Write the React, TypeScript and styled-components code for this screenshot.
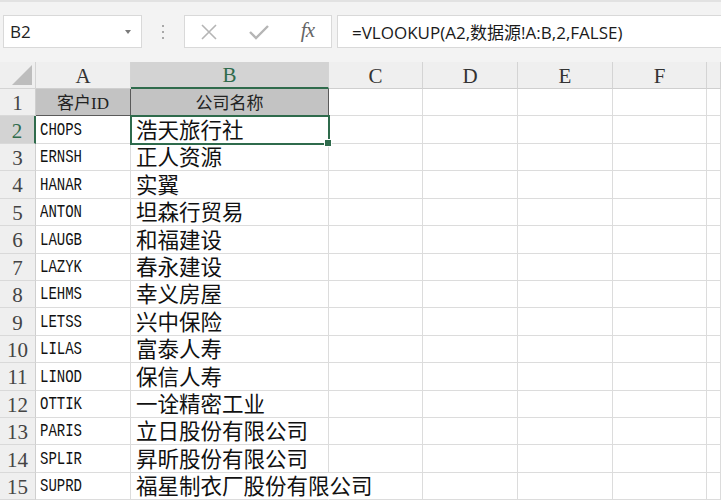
import React from "react";
import styled, { createGlobalStyle, css } from "styled-components";

const GlobalStyle = createGlobalStyle`
  html, body {
    margin: 0;
    padding: 0;
    background: #ffffff;
    overflow: hidden;
  }
`;

const rows: [string, string][] = [
  ["CHOPS", "浩天旅行社"],
  ["ERNSH", "正人资源"],
  ["HANAR", "实翼"],
  ["ANTON", "坦森行贸易"],
  ["LAUGB", "和福建设"],
  ["LAZYK", "春永建设"],
  ["LEHMS", "幸义房屋"],
  ["LETSS", "兴中保险"],
  ["LILAS", "富泰人寿"],
  ["LINOD", "保信人寿"],
  ["OTTIK", "一诠精密工业"],
  ["PARIS", "立日股份有限公司"],
  ["SPLIR", "昇昕股份有限公司"],
  ["SUPRD", "福星制衣厂股份有限公司"],
];

const columns = ["A", "B", "C", "D", "E", "F", ""];
const GREEN = "#2f6b4c";
const GRID = "#dcdcdc";

const Page = styled.div`
  width: 721px;
  height: 500px;
  overflow: hidden;
  display: flex;
  flex-direction: column;
`;

const Toolbar = styled.div`
  height: 62px;
  flex: none;
  box-sizing: border-box;
  background: #f3f3f3;
  border-top: 2px solid #e2e2e2;
  padding: 13px 0 0 3px;
  display: flex;
  align-items: flex-start;
`;

const Box = styled.div`
  height: 33px;
  box-sizing: border-box;
  background: #ffffff;
  border: 1px solid #d9d9d9;
  display: flex;
  align-items: center;
`;

const NameBox = styled(Box)`
  width: 139px;
  padding: 0 0 0 6px;
  justify-content: space-between;
  font-family: "Open Sans", "Liberation Sans", sans-serif;
  font-size: 17px;
  color: #222;
`;

const Caret = styled.span`
  width: 0;
  height: 0;
  margin-right: 10px;
  border-left: 3.5px solid transparent;
  border-right: 3.5px solid transparent;
  border-top: 4px solid #7a7a7a;
`;

const Dots = styled.div`
  width: 42px;
  height: 33px;
  display: flex;
  flex-direction: column;
  align-items: center;
  justify-content: center;
  gap: 4px;
  span {
    width: 2px;
    height: 2px;
    background: #a8a8a8;
  }
`;

const ActionBox = styled(Box)`
  width: 148px;
  padding: 0 17px 0 15px;
  justify-content: space-between;
`;

const Fx = styled.span`
  font-family: "Liberation Serif", serif;
  font-style: italic;
  font-size: 21px;
  color: #666;
  letter-spacing: -1px;
  padding-bottom: 2px;
`;

const FormulaBox = styled(Box)`
  flex: 1;
  margin-left: 5px;
  border-right: none;
  padding-left: 14px;
  font-family: "Open Sans", "Liberation Sans", "Noto Sans CJK SC", sans-serif;
  font-size: 17px;
  color: #1a1a1a;
`;

const Sheet = styled.div`
  flex: 1;
  display: grid;
  grid-template-columns: 36px 95px 198px 94px 95px 95px 94px 1fr;
  grid-template-rows: 27px;
  grid-auto-rows: 27.43px;
`;

const HeaderBase = css`
  box-sizing: border-box;
  background: #efefef;
  display: flex;
  align-items: center;
  justify-content: center;
  font-family: "Liberation Serif", serif;
  font-size: 21px;
`;

const Corner = styled.div`
  ${HeaderBase};
  border-right: 1px solid #d4d4d4;
  border-bottom: 1px solid #d4d4d4;
  position: relative;
  &::after {
    content: "";
    position: absolute;
    right: 3px;
    bottom: 3px;
    width: 0;
    height: 0;
    border-left: 20px solid transparent;
    border-bottom: 20px solid #bdbdbd;
  }
`;

const ColHeader = styled.div<{ $active?: boolean }>`
  ${HeaderBase};
  padding-top: 2px;
  color: ${({ $active }) => ($active ? GREEN : "#333")};
  background: ${({ $active }) => ($active ? "#d3d3d3" : "#efefef")};
  border-right: 1px solid #d4d4d4;
  border-bottom: ${({ $active }) => ($active ? `2px solid ${GREEN}` : "1px solid #cfcfcf")};
`;

const RowHeader = styled.div<{ $active?: boolean }>`
  ${HeaderBase};
  padding-top: 3px;
  color: ${({ $active }) => ($active ? GREEN : "#444")};
  background: ${({ $active }) => ($active ? "#d3d3d3" : "#efefef")};
  border-right: ${({ $active }) => ($active ? `2px solid ${GREEN}` : "1px solid #cfcfcf")};
  border-bottom: 1px solid #d9d9d9;
`;

const Cell = styled.div<{ $noRight?: boolean }>`
  box-sizing: border-box;
  min-width: 0;
  border-right: 1px solid ${({ $noRight }) => ($noRight ? "transparent" : GRID)};
  border-bottom: 1px solid ${GRID};
  display: flex;
  align-items: flex-end;
  white-space: nowrap;
  position: relative;
`;

const TitleCell = styled(Cell)`
  background: #c3c3c3;
  border: 1px solid #5a5a5a;
  border-left: none;
  border-top: none;
  justify-content: center;
  padding-bottom: 1px;
  font-family: "Liberation Serif", "Noto Sans CJK SC", serif;
  font-size: 17px;
  color: #222;
`;

const IdCell = styled(Cell)`
  padding: 0 0 3px 4px;
  font-family: "Liberation Mono", monospace;
  font-size: 14px;
  line-height: 16px;
  color: #111;
  span {
    display: inline-block;
    transform: scaleY(1.25);
    transform-origin: bottom left;
  }
`;

const NameCell = styled(Cell)<{ $selected?: boolean }>`
  padding: 0 0 1px 5px;
  font-family: "Noto Sans CJK SC", sans-serif;
  font-size: 21.5px;
  line-height: 26px;
  color: #111;
  z-index: 1;
  ${({ $selected }) =>
    $selected &&
    css`
      outline: 2px solid ${GREEN};
      outline-offset: -1px;
      z-index: 2;
      &::after {
        content: "";
        position: absolute;
        right: -4px;
        bottom: -4px;
        width: 6px;
        height: 6px;
        background: ${GREEN};
        border: 1px solid #fff;
      }
    `}
`;

const CrossIcon = () => (
  <svg width="18" height="18" viewBox="0 0 18 18">
    <path d="M2 2 L16 16 M16 2 L2 16" stroke="#b5b5b5" strokeWidth="1.6" fill="none" />
  </svg>
);

const CheckIcon = () => (
  <svg width="22" height="18" viewBox="0 0 22 18">
    <path d="M2 9 L8 15 L20 3" stroke="#b5b5b5" strokeWidth="2.4" fill="none" />
  </svg>
);

const EmptyCells = () => (
  <>
    {[0, 1, 2, 3, 4].map((i) => (
      <Cell key={i} />
    ))}
  </>
);

export default function App() {
  return (
    <Page>
      <GlobalStyle />
      <Toolbar>
        <NameBox>
          B2
          <Caret />
        </NameBox>
        <Dots>
          <span />
          <span />
          <span />
        </Dots>
        <ActionBox>
          <CrossIcon />
          <CheckIcon />
          <Fx>fx</Fx>
        </ActionBox>
        <FormulaBox>=VLOOKUP(A2,数据源!A:B,2,FALSE)</FormulaBox>
      </Toolbar>
      <Sheet>
        <Corner />
        {columns.map((c, i) => (
          <ColHeader key={i} $active={c === "B"}>
            {c}
          </ColHeader>
        ))}

        <RowHeader>1</RowHeader>
        <TitleCell>客户ID</TitleCell>
        <TitleCell>公司名称</TitleCell>
        <EmptyCells />

        {rows.map(([id, name], i) => (
          <React.Fragment key={id}>
            <RowHeader $active={i === 0}>{i + 2}</RowHeader>
            <IdCell>
              <span>{id}</span>
            </IdCell>
            <NameCell $selected={i === 0} $noRight={i === rows.length - 1}>
              {name}
            </NameCell>
            <EmptyCells />
          </React.Fragment>
        ))}
      </Sheet>
    </Page>
  );
}
